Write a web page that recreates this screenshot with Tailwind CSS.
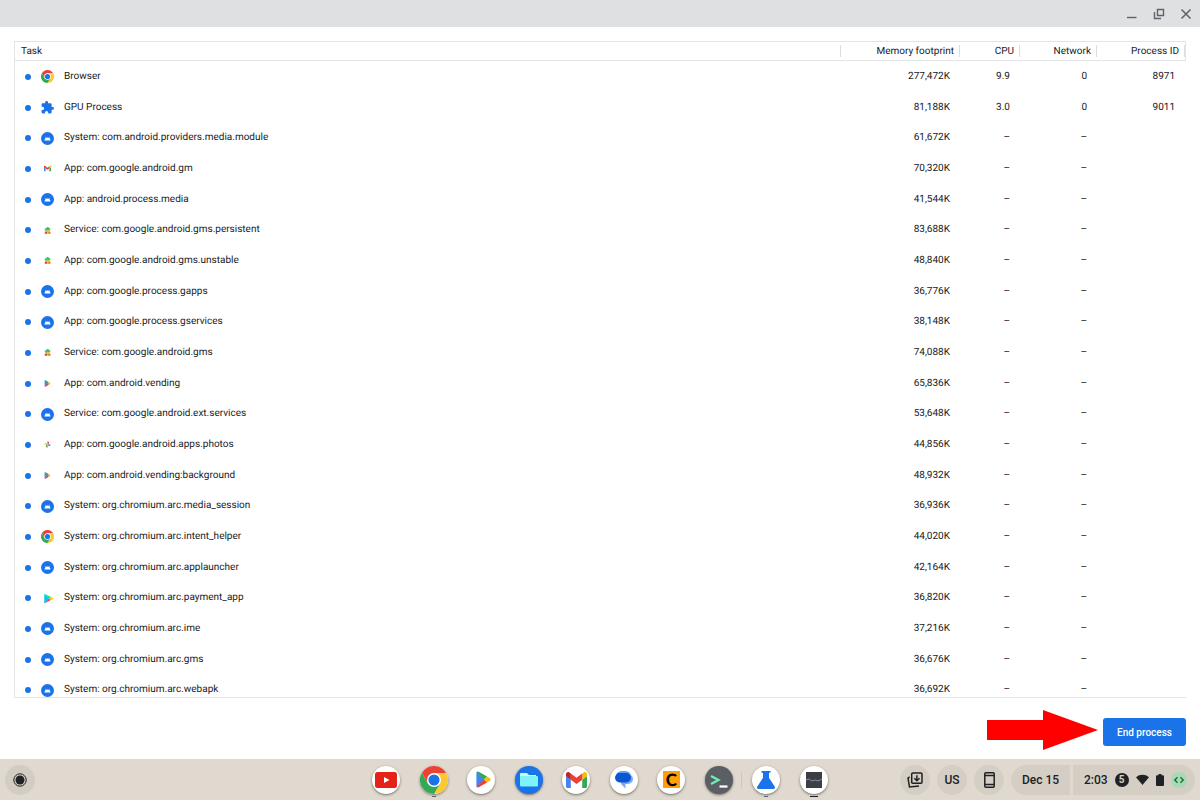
<!DOCTYPE html>
<html lang="en">
<head>
    <meta charset="UTF-8">
    <meta name="viewport" content="width=device-width, initial-scale=1.0">
    <title>Task Manager</title>
    <script src="https://cdn.jsdelivr.net/npm/@tailwindcss/browser@4"></script>
</head>
<body class="h-screen flex flex-col overflow-hidden bg-white font-[Roboto,sans-serif] text-[#202124] [text-rendering:geometricPrecision]">
    <!-- Icon sprites -->
    <svg class="hidden">
        <symbol id="chrome" viewBox="0 0 48 48">
            <circle cx="24" cy="24" r="24" fill="#fff"/>
            <path d="M24 12H44.8A24 24 0 0 0 3.2 12L13.6 30Z" fill="#ea4335"/>
            <path d="M34.4 30 24 48A24 24 0 0 0 44.8 12H24Z" fill="#fcc934"/>
            <path d="M13.6 30 3.2 12A24 24 0 0 0 24 48L34.4 30Z" fill="#34a853"/>
            <circle cx="24" cy="24" r="12" fill="#fff"/>
            <circle cx="24" cy="24" r="9.5" fill="#1a73e8"/>
        </symbol>
        <symbol id="puzzle" viewBox="1 1 22 22">
            <path d="M20.5 11H19V7c0-1.100-.9-2-2-2h-4V3.500a2.500 2.500 0 0 0-5 0V5H4c-1.100 0-2 .9-2 2v3.800h1.500a2.700 2.700 0 0 1 0 5.400H2V20c0 1.100.9 2 2 2h3.800v-1.500a2.700 2.700 0 0 1 5.400 0V22H17c1.100 0 2-.9 2-2v-4h1.500a2.500 2.500 0 0 0 0-5z" fill="#1a73e8"/>
        </symbol>
        <symbol id="android" viewBox="0 0 24 24">
            <circle cx="12" cy="12" r="12" fill="#1a73e8"/>
            <path d="M6.500 15.500a5.500 5.500 0 0 1 2.300-4.500l-1-1.700.6-.4 1.100 1.700a6 6 0 0 1 5 0l1.100-1.700.6.4-1 1.700a5.500 5.500 0 0 1 2.300 4.500z" fill="#fff"/>
        </symbol>
        <symbol id="gmail" viewBox="0 0 24 18">
            <path d="M1.600 18h3.900V8.700L0 4.500v11.800C0 17.300.7 18 1.600 18z" fill="#4285f4"/>
            <path d="M18.500 18h3.900c.9 0 1.600-.7 1.600-1.700V4.500l-5.500 4.200z" fill="#34a853"/>
            <path d="M18.500 1.600v7.100L24 4.600V2.400c0-2-2.300-3.200-3.900-2z" fill="#fbbc04"/>
            <path d="M5.500 8.700V1.600L12 6.500l6.500-4.900v7.100L12 13.600z" fill="#ea4335"/>
            <path d="M0 2.400v2.200l5.500 4.100V1.600L3.900.4C2.300-.8 0 .4 0 2.400z" fill="#c5221f"/>
        </symbol>
        <symbol id="services" viewBox="0 0 12 12">
            <path d="M4 5V4h1a1.200 1.200 0 0 1 2.400 0H8.500v2H4z" fill="#34c759"/>
            <path d="M3.500 4.300h2.300V6H3.500z" fill="#25c5b5"/>
            <path d="M4 6h4v3H4z" fill="#fbbc04"/>
            <path d="M3.500 7.200h2V9h-2z" fill="#ea4335"/>
            <path d="M6.800 7.200h2V9h-2z" fill="#f2762e"/>
        </symbol>
        <symbol id="play" viewBox="0 0 24 24">
            <path d="M2.500 1.500 13 12 2.500 22.500A2 2 0 0 1 2 21V3a2 2 0 0 1 .5-1.500z" fill="#4285f4"/>
            <path d="M2.300 1.800C3 .7 4.200.5 5.300 1.100L17 7.900 12.500 12.500z" fill="#34a853"/>
            <path d="M2.300 22.200c.7 1.100 1.900 1.300 3 .7L17 16.100 12.500 11.500z" fill="#ea4335"/>
            <path d="m17 7.900 4.200 2.500c1.200.7 1.200 2.500 0 3.200L17 16.100 12.500 12z" fill="#fbbc04"/>
        </symbol>
        <symbol id="play-old" viewBox="0 0 24 24">
            <path d="M6 3v18l9-9z" fill="#00c8f0"/>
            <path d="m6 3 13 6.500-4 2.500z" fill="#00e07a"/>
            <path d="m6 21 13-6.500-4-2.500z" fill="#f5394b"/>
            <path d="m18 9 5 3-5 3-3.500-3z" fill="#ffc900"/>
        </symbol>
        <symbol id="photos" viewBox="0 0 24 24">
            <path d="M12 12V1a5.500 5.500 0 0 1 0 11z" fill="#ea4335"/>
            <path d="M12 12h11a5.500 5.500 0 0 1-11 0z" fill="#4285f4"/>
            <path d="M12 12v11a5.500 5.500 0 0 1 0-11z" fill="#34a853"/>
            <path d="M12 12H1a5.500 5.500 0 0 1 11 0z" fill="#fbbc04"/>
        </symbol>
    </svg>

    <!-- Title bar -->
    <header class="h-[27px] shrink-0 bg-[#dee0e2] flex items-center justify-end gap-[15px] pr-2 text-[#5f6368]">
        <button aria-label="Minimize"><svg class="size-3" viewBox="0 0 12 12"><path d="M1 9.500h9.500" stroke="currentColor" stroke-width="1.400"/></svg></button>
        <button aria-label="Restore"><svg class="size-3" viewBox="0 0 12 12" fill="none" stroke="currentColor" stroke-width="1.400"><path d="M4.500 1.500h6v6h-6zM1.500 4v6.500H8"/></svg></button>
        <button aria-label="Close"><svg class="size-3" viewBox="0 0 12 12"><path d="m1.500 1.500 9 9m0-9-9 9" stroke="currentColor" stroke-width="1.500"/></svg></button>
    </header>

    <!-- Task list -->
    <main class="flex-1 min-h-0 flex flex-col pt-[14px] px-[14px]">
        <div class="flex-1 min-h-0 overflow-hidden border-l border-b border-[#e3e4e6]">
            <table class="w-full table-fixed border-separate border-spacing-0 text-[10px] leading-4 text-right">
                <thead>
                    <tr>
                        <th class="h-5 p-0 border-y border-[#e3e4e6] font-normal text-left"><div class="h-3 leading-[14px] pl-1.5 border-r border-[#dcdee0]">Task</div></th>
                        <th class="w-[119px] h-5 p-0 border-y border-[#e3e4e6] font-normal"><div class="h-3 leading-[14px] pr-[5px] border-r border-[#dcdee0]">Memory footprint</div></th>
                        <th class="w-[60px] h-5 p-0 border-y border-[#e3e4e6] font-normal"><div class="h-3 leading-[14px] pr-[5px] border-r border-[#dcdee0]">CPU</div></th>
                        <th class="w-[77px] h-5 p-0 border-y border-[#e3e4e6] font-normal"><div class="h-3 leading-[14px] pr-[5px] border-r border-[#dcdee0]">Network</div></th>
                        <th class="w-[89px] h-5 p-0 border-y border-r border-[#e3e4e6] font-normal"><div class="h-3 leading-[14px] pr-[5px] border-r border-[#dcdee0]">Process ID</div></th>
                    </tr>
                </thead>
                <tbody id="tasks"></tbody>
            </table>
        </div>
        <div class="h-[61px] shrink-0 flex justify-end items-start gap-[5px] pt-3">
            <svg class="w-[111px] h-10" viewBox="0 0 111 40"><path d="M0 10h56V0l55 20-55 20V30H0z" fill="#fe0000"/></svg>
            <button class="mt-2 h-7 w-[83px] rounded-[3px] bg-[#1a73e8] text-white text-[10px] font-medium">End process</button>
        </div>
    </main>

    <!-- Shelf -->
    <footer class="h-[41px] shrink-0 bg-[#e0d9cf] grid grid-cols-[1fr_456px_1fr] items-center px-[5px]">
        <button aria-label="Launcher" class="size-[30px] rounded-full bg-[#d3ccc2] grid place-items-center">
            <svg class="size-[14px]" viewBox="0 0 14 14"><circle cx="7" cy="7" r="6.200" fill="none" stroke="#202124"/><circle cx="7" cy="7" r="4.500" fill="#202124"/></svg>
        </button>
        <nav class="flex justify-between">
            <a href="#" aria-label="YouTube" class="size-7 rounded-full bg-white shadow-sm shadow-black/40 grid place-items-center">
                <svg class="w-[22px] h-4" viewBox="0 0 22 16"><rect width="22" height="16" rx="2.500" fill="#e62117"/><path d="m9 5 5.500 3L9 11z" fill="#fff"/></svg>
            </a>
            <a href="#" aria-label="Chrome" class="relative size-7 rounded-full shadow-sm shadow-black/40">
                <svg class="size-7"><use href="#chrome"/></svg>
                <span class="absolute left-3 top-[30px] w-1 h-px bg-[#5f6368]"></span>
            </a>
            <a href="#" aria-label="Play Store" class="size-7 rounded-full bg-white shadow-sm shadow-black/40 grid place-items-center">
                <svg class="size-[17px] ml-1"><use href="#play"/></svg>
            </a>
            <a href="#" aria-label="Files" class="size-7 rounded-full bg-[#1a73e8] shadow-sm shadow-black/40 grid place-items-center">
                <svg class="w-[18px] h-[15px]" viewBox="0 0 18 15"><path d="M1 1h6l2 2h7v4H0V2a1 1 0 0 1 1-1z" fill="#d2f4fa"/><path d="M0 4h17a1 1 0 0 1 1 1v8.500a1 1 0 0 1-1 1H1a1 1 0 0 1-1-1z" fill="#7df3fb"/></svg>
            </a>
            <a href="#" aria-label="Gmail" class="size-7 rounded-full bg-white shadow-sm shadow-black/40 grid place-items-center">
                <svg class="w-[21px] h-4"><use href="#gmail"/></svg>
            </a>
            <a href="#" aria-label="Messages" class="size-7 rounded-full bg-white shadow-sm shadow-black/40 grid place-items-center">
                <svg class="size-[18px]" viewBox="0 0 18 18"><rect x="1" y="0" width="15" height="11" rx="5.500" fill="#669df6"/><path d="M6 3h7a5 5 0 0 1 0 10h-2.500v4.500L6 13z" fill="#7baaf7"/><rect x="0" y="2" width="16" height="9.500" rx="4.700" fill="#0b57d0"/></svg>
            </a>
            <a href="#" aria-label="C app" class="size-7 rounded-full bg-white shadow-sm shadow-black/40 grid place-items-center">
                <span class="size-[17px] bg-[#ff9d0b] text-black text-[17px] leading-[17px] font-black text-center font-[Lato,sans-serif]">C</span>
            </a>
            <a href="#" aria-label="Terminal" class="size-7 rounded-full bg-[#5b5f64] shadow-sm shadow-black/40 grid place-items-center">
                <svg class="size-[18px]" viewBox="0 0 18 18" fill="none" stroke-width="2.200"><path d="m1 5 7.500 4L1 13" stroke="#6ff0b5"/><path d="M9.500 15.500h8" stroke="#fff"/></svg>
            </a>
            <a href="#" aria-label="Labs" class="relative size-7 rounded-full bg-white shadow-sm shadow-black/40 grid place-items-center">
                <span class="absolute -left-[11px] top-1.5 w-px h-4 bg-[#cdc6bc]"></span>
                <svg class="size-[18px]" viewBox="0 0 18 18"><path d="M4.500 0h9v1.800H12v5l5.800 9c.6 1-.1 2.200-1.300 2.200h-15C.3 18-.4 16.800.2 15.800l5.800-9v-5H4.500z" fill="#1a73e8"/></svg>
                <span class="absolute left-3 top-[30px] w-1 h-px bg-[#5f6368]"></span>
            </a>
            <a href="#" aria-label="Task Manager" class="relative size-7 rounded-full bg-white shadow-sm shadow-black/40 grid place-items-center">
                <svg class="size-4" viewBox="0 0 16 16"><path d="M0 0h16v16H0z" fill="#3c3d41"/><path d="M0 8l3-1 3 2 3-1 3 1 4-2v9H0z" fill="#3b4048"/><path d="M0 8l3-1 3 2 3-1 3 1 4-2" fill="none" stroke="#8fa3bf" stroke-width=".8"/></svg>
                <span class="absolute left-2.5 top-[30px] w-2 h-px bg-[#202124]"></span>
            </a>
        </nav>
        <div class="flex justify-end gap-[7px] text-[12px] font-medium">
            <button aria-label="Holding space" class="size-[30px] rounded-full bg-[#d5cec4] grid place-items-center">
                <svg class="size-4" viewBox="0 0 16 16" fill="none" stroke="#202124" stroke-width="1.500"><rect x="4.700" y="1" width="10.300" height="10.300" rx="1"/><path d="M9.900 3.200v5.200M7.300 6.200l2.600 2.500 2.600-2.500M2.600 5 1 6l1.500 9 9.500-1"/></svg>
            </button>
            <button class="size-[30px] rounded-full bg-[#d5cec4]">US</button>
            <button aria-label="Phone hub" class="size-[30px] rounded-full bg-[#d5cec4] grid place-items-center">
                <svg class="w-[11px] h-4" viewBox="0 0 11 16" fill="none" stroke="#202124" stroke-width="1.500"><rect x=".8" y=".8" width="9.400" height="14.400" rx="1"/><path d="M1 3.500h9M1 12.500h9"/></svg>
            </button>
            <div class="flex gap-[3px]">
                <button class="h-[30px] w-[59px] rounded-l-full rounded-r-sm bg-[#d5cec4]">Dec 15</button>
                <button class="h-[30px] w-[122px] rounded-l-sm rounded-r-full bg-[#d5cec4] flex items-center pl-[11px] gap-[7px]">
                    <span>2:03</span>
                    <span class="size-[14px] rounded-full bg-[#202124] text-[#d5cec4] text-[10px] leading-[14px] font-bold text-center">5</span>
                    <svg class="w-[13px] h-3" viewBox="0 0 14 12"><path d="M0 3a10.500 10.500 0 0 1 14 0L7 11.500z" fill="#202124"/></svg>
                    <svg class="w-2 h-3" viewBox="0 0 8 12"><path d="M2.500 0h3v1.300H7a1 1 0 0 1 1 1V11a1 1 0 0 1-1 1H1a1 1 0 0 1-1-1V2.300a1 1 0 0 1 1-1h1.500z" fill="#202124"/></svg>
                    <svg class="size-4" viewBox="0 0 16 16"><circle cx="8" cy="8" r="8" fill="#a8dab5"/><path d="M6.500 5.300 3.800 8l2.700 2.700M9.500 5.300 12.200 8l-2.700 2.700" fill="none" stroke="#137333" stroke-width="1.400"/></svg>
                </button>
            </div>
        </div>
    </footer>

    <script>
        const tasks = [
            ['chrome', 'Browser', '277,472K', '9.9', '0', '8971'],
            ['puzzle', 'GPU Process', '81,188K', '3.0', '0', '9011'],
            ['android', 'System: com.android.providers.media.module', '61,672K'],
            ['gmail', 'App: com.google.android.gm', '70,320K'],
            ['android', 'App: android.process.media', '41,544K'],
            ['services', 'Service: com.google.android.gms.persistent', '83,688K'],
            ['services', 'App: com.google.android.gms.unstable', '48,840K'],
            ['android', 'App: com.google.process.gapps', '36,776K'],
            ['android', 'App: com.google.process.gservices', '38,148K'],
            ['services', 'Service: com.google.android.gms', '74,088K'],
            ['play', 'App: com.android.vending', '65,836K'],
            ['android', 'Service: com.google.android.ext.services', '53,648K'],
            ['photos', 'App: com.google.android.apps.photos', '44,856K'],
            ['play', 'App: com.android.vending:background', '48,932K'],
            ['android', 'System: org.chromium.arc.media_session', '36,936K'],
            ['chrome', 'System: org.chromium.arc.intent_helper', '44,020K'],
            ['android', 'System: org.chromium.arc.applauncher', '42,164K'],
            ['play-old', 'System: org.chromium.arc.payment_app', '36,820K'],
            ['android', 'System: org.chromium.arc.ime', '37,216K'],
            ['android', 'System: org.chromium.arc.gms', '36,676K'],
            ['android', 'System: org.chromium.arc.webapk', '36,692K']
        ];
        const small = ['gmail', 'play', 'photos'];

        document.getElementById('tasks').innerHTML = tasks.map(([icon, name, memory, cpu = '–', network = '–', pid = '']) => `
            <tr class="h-[31px] nth-[3n]:h-[30px]">
                <td class="p-0 text-left">
                    <div class="flex items-center gap-2.5 pl-2.5">
                        <span class="size-1.5 rounded-full bg-[#1a73e8]"></span>
                        <span class="w-[13px] flex justify-center">
                            <svg class="${small.includes(icon) ? 'size-[7px]' : 'size-[13px]'}"><use href="#${icon}"/></svg>
                        </span>
                        <span>${name}</span>
                    </div>
                </td>
                <td class="p-0 pr-2.5">${memory}</td>
                <td class="p-0 pr-2.5">${cpu}</td>
                <td class="p-0 pr-2.5">${network}</td>
                <td class="p-0 pr-[11px]">${pid}</td>
            </tr>
        `).join('');
    </script>
</body>
</html>
